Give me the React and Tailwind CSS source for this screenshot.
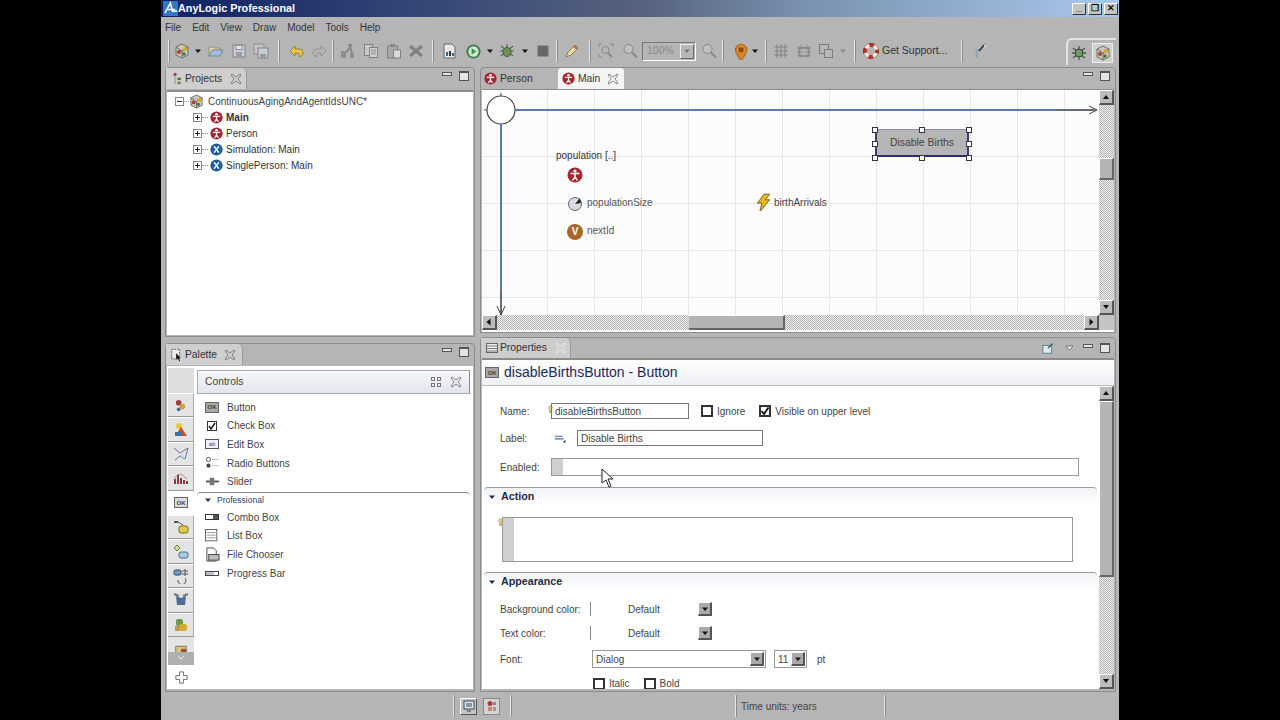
import React from "react";

// tiny drawn icons, all 16x16 unless noted
const Svg = ({ s = 16, vb = "0 0 16 16", className = "", children }) => (
  <svg width={s} height={s} viewBox={vb} className={"shrink-0 " + className}>
    {children}
  </svg>
);

const Agent = ({ s = 14, fill = "#a8242f" }) => (
  <Svg s={s}>
    <circle cx="8" cy="8" r="7.5" fill={fill} />
    <circle cx="8" cy="4" r="1.6" fill="#fff" />
    <path d="M3.5 6.5h9M8 6v4M8 10l-2.5 3.5M8 10l2.5 3.5" stroke="#fff" strokeWidth="1.5" fill="none" />
  </Svg>
);
const Sim = () => (
  <Svg s={13}>
    <circle cx="8" cy="8" r="7.5" fill="#1f5c9c" />
    <path d="M5 4l6 8M11 4l-6 8" stroke="#dfeaf5" strokeWidth="2" />
  </Svg>
);
const Cube = ({ s = 16 }) => (
  <Svg s={s}>
    <path d="M8 1l6 3v8l-6 3-6-3V4z" fill="#c9c9bd" stroke="#6d6d60" />
    <path d="M8 8L2 4M8 8l6-4M8 8v7" stroke="#6d6d60" fill="none" />
    <circle cx="5" cy="9" r="2" fill="#b33a2c" />
    <circle cx="11" cy="6" r="2" fill="#d8a520" />
    <circle cx="10" cy="11" r="1.7" fill="#3a7a3a" />
  </Svg>
);
const Caret = ({ color = "#111" }) => (
  <Svg s={6} vb="0 0 6 6">
    <path d="M0 1.5h6L3 5z" fill={color} />
  </Svg>
);
const Open = () => (
  <Svg>
    <path d="M1 13V4h4l1 1h6v2" fill="#e8d9a0" stroke="#8b8b80" />
    <path d="M1 13l3-6h11l-3 6z" fill="#9fc0de" stroke="#6d87a0" />
  </Svg>
);
const Save = ({ dim }) => (
  <Svg>
    <rect x="2" y="2" width="12" height="12" fill={dim ? "#bdbdbd" : "#c6cdd6"} stroke="#80848a" />
    <rect x="5" y="2.5" width="6" height="4" fill="#e8e8e8" stroke="#8f8f8f" />
    <rect x="5" y="9" width="6" height="5" fill="#9a9ea3" />
  </Svg>
);
const SaveAll = () => (
  <Svg>
    <rect x="1" y="1" width="10" height="10" fill="#c4c4c4" stroke="#8f8f8f" />
    <rect x="5" y="5" width="10" height="10" fill="#c6cdd6" stroke="#80848a" />
    <rect x="7" y="11" width="6" height="4" fill="#999" />
  </Svg>
);
const Undo = ({ dim }) => (
  <Svg>
    <path
      d="M1 8l5-5v3h4c3 0 4 2 4 4s-2 4-4 4c1-1 1-4-1-4H6v3z"
      fill={dim ? "none" : "#e8c64a"}
      stroke={dim ? "#8d8d8d" : "#8f7a2c"}
      strokeWidth="0.9"
    />
  </Svg>
);
const Redo = () => (
  <svg width="16" height="16" viewBox="0 0 16 16" className="shrink-0 -scale-x-100">
    <path d="M1 8l5-5v3h4c3 0 4 2 4 4s-2 4-4 4c1-1 1-4-1-4H6v3z" fill="none" stroke="#8d8d8d" strokeWidth="0.9" />
  </svg>
);
const Cut = () => (
  <Svg>
    <path d="M12 1L6 10M9 1l3 9" stroke="#858585" strokeWidth="2" fill="none" />
    <rect x="1" y="8" width="5" height="7" fill="#8e8e8e" />
    <rect x="10" y="10" width="4" height="5" fill="#8e8e8e" />
  </Svg>
);
const Copy = () => (
  <Svg>
    <rect x="1.5" y="1.5" width="8" height="11" fill="#c9c9c9" stroke="#808080" />
    <rect x="6.5" y="4.5" width="8" height="10" fill="#d0d0d0" stroke="#808080" />
    <path d="M8 7h5M8 9h5M8 11h5" stroke="#909090" />
  </Svg>
);
const Paste = () => (
  <Svg>
    <rect x="1.5" y="3" width="10" height="12" fill="#a9a9a9" stroke="#808080" />
    <rect x="4" y="1" width="5" height="3" fill="#8a8a8a" />
    <rect x="7.5" y="7" width="7" height="8" fill="#d8d8d8" stroke="#808080" />
  </Svg>
);
const Del = () => (
  <Svg>
    <path d="M2 3l12 10M14 3L2 13" stroke="#808080" strokeWidth="3" />
  </Svg>
);
const Build = () => (
  <Svg>
    <path d="M2 1h8l3 3v11H2z" fill="#e8e8e8" stroke="#666" />
    <rect x="4" y="9" width="2" height="4" fill="#2a66a8" />
    <rect x="7" y="8" width="2" height="5" fill="#333" />
    <rect x="10" y="10" width="2" height="3" fill="#2a66a8" />
  </Svg>
);
const Run = () => (
  <Svg s={15}>
    <circle cx="8" cy="8" r="7.5" fill="#3f7a4a" />
    <circle cx="8" cy="8" r="5.5" fill="#d4e8d4" />
    <path d="M6 4.5l5 3.5-5 3.5z" fill="#2e9a3e" />
  </Svg>
);
const Bug = () => (
  <Svg>
    <path d="M2 3l12 10M14 3L2 13M1 8h14M8 1v3" stroke="#4a6a4a" strokeWidth="1.2" />
    <ellipse cx="8" cy="9" rx="4" ry="4.5" fill="#6f8f55" stroke="#3c5a3c" />
  </Svg>
);
const Stop = () => (
  <Svg s={14}>
    <rect x="2" y="2" width="12" height="12" fill="#666" stroke="#8a8a8a" />
  </Svg>
);
const Pencil = () => (
  <Svg>
    <path d="M2 14l2-5 7-7 3 3-7 7z" fill="#e8d8a0" stroke="#8f7a50" />
    <path d="M10 3l3 3" stroke="#b06a40" strokeWidth="2" />
  </Svg>
);
const ZoomFit = () => (
  <Svg>
    <path d="M1 4V1h3M12 1h3v3M1 11v3h3" stroke="#8a8a8a" fill="none" />
    <circle cx="7.5" cy="7" r="3.5" fill="none" stroke="#8a8a8a" />
    <path d="M10 10l4 4" stroke="#8a8a8a" strokeWidth="2" />
  </Svg>
);
const Zoom = () => (
  <Svg>
    <circle cx="6.5" cy="6" r="4.5" fill="#bfbfbf" stroke="#8a8a8a" />
    <path d="M10 9.5l5 5" stroke="#8a8a8a" strokeWidth="2" />
  </Svg>
);
const Pin = () => (
  <Svg s={18}>
    <path d="M9 17C6 12 4 10 4 7a5 5 0 0110 0c0 3-2 5-5 10z" fill="#d8862c" stroke="#a96a20" />
    <rect x="7" y="5" width="4" height="4" fill="#8a4a12" />
  </Svg>
);
const Grid = () => (
  <Svg>
    <path d="M4 1v14M8 1v14M12 1v14M1 4h14M1 8h14M1 12h14" stroke="#808080" />
  </Svg>
);
const Grid2 = () => (
  <Svg>
    <path d="M1 4h14M1 9h14M5 1v14M11 1v14" stroke="#999" />
    <rect x="3" y="5" width="10" height="8" fill="none" stroke="#707070" />
  </Svg>
);
const Layers = () => (
  <Svg>
    <rect x="1.5" y="1.5" width="9" height="9" fill="none" stroke="#7d7d7d" />
    <rect x="6.5" y="6.5" width="8" height="8" fill="#b8b8b8" stroke="#7d7d7d" />
  </Svg>
);
const Life = () => (
  <Svg>
    <circle cx="8" cy="8" r="6" fill="none" stroke="#f0ebe6" strokeWidth="4" />
    <circle cx="8" cy="8" r="6" fill="none" stroke="#b83226" strokeWidth="4" strokeDasharray="4.7 4.7" strokeDashoffset="2.3" />
    <circle cx="8" cy="8" r="7.7" fill="none" stroke="#6a2a24" strokeWidth="0.5" />
  </Svg>
);
const Wand = () => (
  <Svg>
    <path d="M4 6h5v2H7v7H5V8H4z" fill="#8fa4b8" />
    <path d="M8 8l6-7" stroke="#333" strokeWidth="1.6" />
    <path d="M13 1l1 2M15 4l-2-1" stroke="#e8e8e8" />
  </Svg>
);
const Gear = () => (
  <Svg>
    <path d="M2 3l12 10M14 3L2 13M1 8h14M8 1v14" stroke="#4a5a4a" strokeWidth="1.3" />
    <circle cx="8" cy="8" r="4" fill="#6f9a6a" stroke="#354a35" />
  </Svg>
);
const Close = ({ c = "#777", className = "" }) => (
  <Svg s={12} vb="0 0 12 12" className={className}>
    <path d="M2 1l4 3 4-3 1 1-3 4 3 4-1 1-4-3-4 3-1-1 3-4-3-4z" fill="none" stroke={c} strokeWidth="0.9" />
  </Svg>
);
const MinMax = () => (
  <div className="flex items-center gap-[7px]">
    <div className="w-[10px] h-[4px] border border-[#555] bg-[#e4e4e4] -mt-[5px]" />
    <div className="w-[10px] h-[10px] border border-[#555] border-t-2 bg-[#e4e4e4]" />
  </div>
);
const Sep = ({ className = "w-[14px]" }) => (
  <div className={"flex justify-center shrink-0 " + className}>
    <div className="w-[2px] h-[22px] bg-[#e6e6e6] border-r border-[#8a8a8a]" />
  </div>
);
const T = ({ className, children }) => (
  <div className={"flex items-center justify-center shrink-0 " + className}>{children}</div>
);

const Arrow = ({ d }) => {
  const p = { u: "M1 6l3-4 3 4z", d: "M1 2l3 4 3-4z", l: "M5.5 0.5v7l-4-3.5z", r: "M2.5 0.5v7l4-3.5z" }[d];
  return (
    <div className="w-[15px] h-[15px] shrink-0 flex items-center justify-center bg-[#bcbcbc] border-t border-l border-white border-r-2 border-b-2 border-r-[#555] border-b-[#555]">
      <Svg s={8} vb="0 0 8 8">
        <path d={p} fill="#111" />
      </Svg>
    </div>
  );
};
const dither = "bg-[repeating-conic-gradient(#b4b4b4_0_25%,#f0f0f0_0_50%)] bg-[size:2px_2px]";

const TabLabel = ({ children }) => <span className="text-[10.3px] text-[#333]">{children}</span>;

const Check = ({ checked, className = "w-[12px] h-[12px]" }) => (
  <div className={"border-2 border-[#333] bg-white shrink-0 flex items-center justify-center " + className}>
    {checked && (
      <Svg s={10} vb="0 0 10 10">
        <path d="M1.5 5l2.5 3 4.5-6.5" fill="none" stroke="#111" strokeWidth="1.8" />
      </Svg>
    )}
  </div>
);

const Bulb = () => (
  <Svg s={9} vb="0 0 6 10">
    <path d="M1 4a2 2 0 014 0c0 1-1 2-1 3H2c0-1-1-2-1-3zM2 8h2v1.5H2z" fill="#e8d88a" stroke="#8a7a3a" strokeWidth="0.6" />
  </Svg>
);

function TreeRow({ icon, bold, children }) {
  return (
    <div className="flex items-center h-[16px] pl-[26px]">
      <div className="w-[9px] h-[9px] border border-[#888] bg-white flex items-center justify-center relative shrink-0">
        <div className="w-[5px] h-px bg-[#222]" />
        <div className="absolute w-px h-[5px] bg-[#222]" />
      </div>
      <div className="w-[6px] border-t border-dotted border-[#999] shrink-0 mr-[1px]" />
      <div className="w-[14px] flex justify-center shrink-0">{icon}</div>
      <span className={"ml-[3px] text-[10px] text-[#333] " + (bold ? "font-bold text-[#111]" : "")}>{children}</span>
    </div>
  );
}

function Projects() {
  return (
    <section className="h-[270px] flex flex-col border border-[#8c8c8c] rounded-t-[4px]">
      <header className="h-[22px] flex items-start pr-[5px]">
        <div className="w-[81px] h-[21px] flex items-center gap-[1px] pl-[5px] bg-[#cfcfcf] rounded-tr-[5px] border-r border-[#999]">
          <Svg s={13}>
            <circle cx="5" cy="3" r="2" fill="#a83c3c" />
            <path d="M5 4v11" stroke="#888" />
            <rect x="8" y="7" width="4" height="3" fill="#4a6f3a" />
            <rect x="8" y="12" width="4" height="3" fill="#8a7a3a" />
          </Svg>
          <TabLabel>Projects</TabLabel>
          <Close className="ml-[7px]" />
        </div>
        <div className="ml-auto mt-[3px]">
          <MinMax />
        </div>
      </header>
      <div className="mx-px mb-px flex-1 bg-white border-t-2 border-[#8c8c8c] pt-[1px]">
        <div className="flex items-center h-[16px] pl-[8px]">
          <div className="w-[9px] h-[9px] border border-[#888] flex items-center justify-center shrink-0">
            <div className="w-[5px] h-px bg-[#222]" />
          </div>
          <div className="w-[5px] border-t border-dotted border-[#999] shrink-0" />
          <Cube s={15} />
          <span className="ml-[4px] text-[10px] text-[#444]">ContinuousAgingAndAgentIdsUNC*</span>
        </div>
        <TreeRow bold icon={<Agent s={13} />}>Main</TreeRow>
        <TreeRow icon={<Agent s={13} />}>Person</TreeRow>
        <TreeRow icon={<Sim />}>Simulation: Main</TreeRow>
        <TreeRow icon={<Sim />}>SinglePerson: Main</TreeRow>
      </div>
    </section>
  );
}

const RailBtn = ({ active, children }) => (
  <div
    className={
      "h-[24.4px] flex items-center justify-center " +
      (active ? "" : "bg-[#e4e4e4] border-t border-white border-b border-b-[#999] border-r border-r-[#aaa]")
    }
  >
    {children}
  </div>
);
const OkIcon = ({ dark }) => (
  <div
    className={
      "w-[14px] h-[11px] border border-[#666] flex items-center justify-center text-[6px] leading-none font-bold text-[#444] " +
      (dark ? "bg-[#a8a8a8]" : "bg-[#dcdcdc]")
    }
  >
    OK
  </div>
);

const PaletteItem = ({ icon, children }) => (
  <div className="h-[18.6px] flex items-center pl-[8px]">
    <div className="w-[14px] flex justify-center shrink-0">{icon}</div>
    <span className="ml-[8px] text-[10px] text-[#444]">{children}</span>
  </div>
);

function Palette() {
  return (
    <section className="flex-1 flex flex-col border border-[#8c8c8c] rounded-t-[4px]">
      <header className="h-[22px] flex items-start pr-[5px]">
        <div className="w-[77px] h-[21px] flex items-center gap-[1px] pl-[4px] bg-[#cfcfcf] rounded-tr-[5px] border-r border-[#999]">
          <Svg s={14}>
            <rect x="2" y="1.5" width="9" height="11" fill="#eee" stroke="#555" strokeDasharray="2 1" />
            <path d="M7 6l5 5-2 .5 1.5 3-1 .5-1.5-3L7 13z" fill="#111" />
          </Svg>
          <TabLabel>Palette</TabLabel>
          <Close className="ml-[6px]" />
        </div>
        <div className="ml-auto mt-[3px]">
          <MinMax />
        </div>
      </header>
      <div className="mx-px mb-[2px] flex-1 bg-white flex overflow-hidden">
        <div className="w-[26px] ml-px pt-[2px] flex flex-col shrink-0">
          <div className="h-[25px] bg-[#dedede]" />
          <RailBtn>
            <Svg s={15}>
              <circle cx="6" cy="5" r="3" fill="#a83c3c" />
              <circle cx="10" cy="9" r="3" fill="#d0a030" />
              <circle cx="6" cy="12" r="2" fill="#4a6aa0" />
            </Svg>
          </RailBtn>
          <RailBtn>
            <Svg>
              <circle cx="6" cy="4" r="3" fill="#e8c83a" />
              <path d="M2 14L8 5l6 9z" fill="#c4502c" />
              <rect x="2" y="10" width="7" height="4" fill="#3a70b0" />
            </Svg>
          </RailBtn>
          <RailBtn>
            <Svg>
              <path d="M1 2l6 5 8-5-3 11-5-3-5 4" fill="none" stroke="#5a7a9a" />
              <path d="M7 7l5 6-5-3z" fill="#b8d4e8" />
            </Svg>
          </RailBtn>
          <RailBtn>
            <Svg>
              <path d="M2 14V9M5 14V5M8 14V8M11 14V10M14 14v-3" stroke="#8a3a3a" strokeWidth="2" />
              <path d="M1 10C4 3 7 2 14 9" stroke="#c08080" fill="none" />
            </Svg>
          </RailBtn>
          <RailBtn active>
            <OkIcon />
          </RailBtn>
          <RailBtn>
            <Svg>
              <rect x="1" y="2" width="4" height="2" fill="#555" />
              <path d="M5 3l5 3" stroke="#555" />
              <rect x="6" y="7" width="9" height="7" rx="2" fill="#e0cc50" stroke="#7a6a20" />
            </Svg>
          </RailBtn>
          <RailBtn>
            <Svg>
              <path d="M4 1l3 3-3 3-3-3z" fill="#cde0a0" stroke="#6a7a3a" />
              <rect x="6" y="8" width="9" height="6" rx="2" fill="#a8cce8" stroke="#4a6a8a" />
            </Svg>
          </RailBtn>
          <RailBtn>
            <Svg>
              <rect x="1" y="2" width="7" height="5" rx="1.5" fill="#6a9ad0" stroke="#345" />
              <path d="M9 3h6M9 6h6M12 1v7" stroke="#555" />
              <path d="M12 10a4 4 0 11-7 2" fill="none" stroke="#555" />
            </Svg>
          </RailBtn>
          <RailBtn>
            <Svg>
              <path d="M3 4l5 2 5-2-1 9H4z" fill="#4f6a96" />
              <path d="M1 2l5 2M15 2l-5 2" stroke="#777" strokeWidth="2" />
            </Svg>
          </RailBtn>
          <RailBtn>
            <Svg>
              <rect x="3" y="2" width="7" height="7" rx="2" fill="#6a9a4a" />
              <rect x="6" y="7" width="8" height="7" rx="2" fill="#d8a830" />
              <rect x="2" y="9" width="5" height="5" fill="#b89a50" />
            </Svg>
          </RailBtn>
          <div className="h-[15px] bg-[#e4e4e4] flex justify-center pt-[4px] overflow-hidden">
            <Svg s={14}>
              <path d="M2 6h12v9H2z" fill="#d8c880" stroke="#7a6a3a" />
              <rect x="8" y="9" width="6" height="6" fill="#a84a3a" />
            </Svg>
          </div>
          <div className="h-[13px] bg-[#b0b0b0] flex items-center justify-center">
            <Svg s={8} vb="0 0 8 8">
              <path d="M1 2l3 3 3-3" fill="none" stroke="#eee" />
            </Svg>
          </div>
          <div className="flex justify-center mt-[5px]">
            <Svg s={15}>
              <path d="M6 2h4v4h4v4h-4v4H6v-4H2V6h4z" fill="#fff" stroke="#666" />
            </Svg>
          </div>
        </div>
        <div className="flex-1 pl-[3px] pr-[3px] pt-[4px]">
          <div className="h-[24px] flex items-center pl-[7px] pr-[7px] border border-[#a3acb6] border-r-[#889] bg-[linear-gradient(#f6f8fa,#e2e7ee)]">
            <span className="text-[10.3px] text-[#444]">Controls</span>
            <div className="ml-auto mr-[9px] grid grid-cols-2 gap-[2px]">
              <div className="w-[4px] h-[4px] border border-[#777]" />
              <div className="w-[4px] h-[4px] border border-[#777]" />
              <div className="w-[4px] h-[4px] border border-[#777]" />
              <div className="w-[4px] h-[4px] border border-[#777]" />
            </div>
            <Close />
          </div>
          <div className="pt-[4px]">
            <PaletteItem icon={<OkIcon dark />}>Button</PaletteItem>
            <PaletteItem
              icon={
                <div className="w-[10px] h-[10px] border border-[#333] flex items-center justify-center">
                  <Svg s={8} vb="0 0 8 8">
                    <path d="M1 4l2 3 4-6" fill="none" stroke="#111" strokeWidth="1.4" />
                  </Svg>
                </div>
              }
            >
              Check Box
            </PaletteItem>
            <PaletteItem
              icon={
                <div className="w-[14px] h-[10px] border border-[#555] flex items-center justify-center text-[6px] leading-none text-[#357] bg-[#eef]">
                  ab
                </div>
              }
            >
              Edit Box
            </PaletteItem>
            <PaletteItem
              icon={
                <Svg s={14}>
                  <circle cx="4" cy="4" r="2.4" fill="#fff" stroke="#444" />
                  <circle cx="4" cy="11" r="2.4" fill="#444" />
                  <path d="M8 4h7M8 11h7" stroke="#777" strokeDasharray="1 1" />
                </Svg>
              }
            >
              Radio Buttons
            </PaletteItem>
            <PaletteItem
              icon={
                <Svg s={15}>
                  <path d="M1 8h14" stroke="#555" strokeWidth="2" />
                  <rect x="5" y="4" width="5" height="8" rx="1" fill="#777" />
                </Svg>
              }
            >
              Slider
            </PaletteItem>
          </div>
          <div className="h-[16px] mt-[1px] flex items-center border-t border-[#888] rounded-t-[4px] pl-[8px]">
            <Caret color="#234" />
            <span className="ml-[6px] text-[8.5px] text-[#2c4460]">Professional</span>
          </div>
          <div>
            <PaletteItem
              icon={
                <div className="w-[15px] h-[6px] border border-[#333] flex justify-end">
                  <div className="w-[5px] bg-[#555]" />
                </div>
              }
            >
              Combo Box
            </PaletteItem>
            <PaletteItem
              icon={
                <Svg s={14}>
                  <rect x="0.5" y="0.5" width="13" height="13" fill="#fff" stroke="#555" />
                  <path d="M2 4h10M2 7h10M2 10h10" stroke="#8a8aa0" />
                </Svg>
              }
            >
              List Box
            </PaletteItem>
            <PaletteItem
              icon={
                <Svg s={15}>
                  <path d="M2 1h7l3 3v11H2z" fill="#fff" stroke="#444" />
                  <rect x="4" y="8" width="11" height="6" fill="#bbb" stroke="#444" />
                </Svg>
              }
            >
              File Chooser
            </PaletteItem>
            <PaletteItem
              icon={
                <div className="w-[15px] h-[5px] border border-[#444] bg-[linear-gradient(90deg,#bcc0d0_70%,#fff_70%)]" />
              }
            >
              Progress Bar
            </PaletteItem>
          </div>
        </div>
      </div>
    </section>
  );
}

const Handle = ({ className }) => (
  <div className={"absolute w-[6px] h-[6px] bg-white border border-[#334] " + className} />
);

function Editor() {
  return (
    <section className="h-[266px] flex flex-col border border-[#8c8c8c] rounded-t-[4px]">
      <header className="h-[21px] flex items-start pr-[5px]">
        <div className="w-[77px] h-[21px] flex items-center gap-[3px] pl-[3px]">
          <Agent s={13} />
          <TabLabel>Person</TabLabel>
        </div>
        <div className="w-[66px] h-[21px] flex items-center gap-[3px] pl-[4px] bg-[#f4f4f4] rounded-t-[3px]">
          <Agent s={13} />
          <TabLabel>Main</TabLabel>
          <Close className="ml-[4px]" />
        </div>
        <div className="ml-auto mt-[3px]">
          <MinMax />
        </div>
      </header>
      <div className="mx-px flex-1 flex flex-col bg-white border-t border-[#8c8c8c] overflow-hidden">
        <div className="flex-1 flex min-h-0">
          <div className="flex-1 relative bg-[#fcfcfc] bg-[linear-gradient(#e6e6ea_1px,transparent_1px),linear-gradient(90deg,#e6e6ea_1px,transparent_1px)] bg-[size:47px_47px] bg-[position:18px_19px]">
            {/* diagram canvas: axes and elements sit where they were placed */}
            <svg className="absolute left-0 top-0" width="618" height="226">
              <circle cx="19" cy="20" r="14" fill="#fff" stroke="#444" strokeWidth="1.2" />
              <path d="M19 3v3M2 20h3" stroke="#555" />
              <path d="M33 20H612" stroke="#5b7bab" strokeWidth="2" />
              <path d="M575 20h39" stroke="#666" strokeWidth="1.5" />
              <path d="M607 16l8 4-8 4" fill="none" stroke="#444" />
              <path d="M19 34V225" stroke="#5b7bab" strokeWidth="2" />
              <path d="M19 200v25" stroke="#666" strokeWidth="1.5" />
              <path d="M15 216l4 9 4-9" fill="none" stroke="#444" />
            </svg>
            <span className="absolute left-[74px] top-[58px] text-[10px] text-[#333]">population [..]</span>
            <div className="absolute left-[85px] top-[77px]">
              <Agent s={16} />
            </div>
            <div className="absolute left-[85px] top-[105px] flex items-center gap-[4px]">
              <Svg s={16}>
                <circle cx="8" cy="8" r="6.5" fill="#d8dce0" stroke="#666" />
                <path d="M8 8l5-6 1 5z" fill="#222" />
              </Svg>
              <span className="pb-[2px] text-[10px] text-[#555]">populationSize</span>
            </div>
            <div className="absolute left-[85px] top-[133px] flex items-center gap-[4px]">
              <div className="w-[16px] h-[16px] rounded-full bg-[#a9682a] flex items-center justify-center text-white text-[10px] font-bold leading-none">
                V
              </div>
              <span className="pb-[2px] text-[10px] text-[#555]">nextId</span>
            </div>
            <div className="absolute left-[272px] top-[103px] flex items-center gap-[2px]">
              <Svg s={18}>
                <path d="M9 1h5l-4 5h4L5 17l2-8H3z" fill="#e8b820" stroke="#6a5a20" strokeWidth="0.8" />
              </Svg>
              <span className="text-[10px] text-[#444]">birthArrivals</span>
            </div>
            <div className="absolute left-[393px] top-[39px] w-[94px] h-[28px] bg-[#b6b6b6] border-t border-x-2 border-x-[#3c3c78] border-t-[#8a8ab0] border-b-2 border-b-[#2c2c70] flex items-center justify-center text-[10.4px] text-[#444]">
              Disable Births
            </div>
            <Handle className="left-[390px] top-[37px]" />
            <Handle className="left-[437px] top-[37px]" />
            <Handle className="left-[484px] top-[37px]" />
            <Handle className="left-[390px] top-[51px]" />
            <Handle className="left-[484px] top-[51px]" />
            <Handle className="left-[390px] top-[65px]" />
            <Handle className="left-[437px] top-[65px]" />
            <Handle className="left-[484px] top-[65px]" />
          </div>
          <div className={"w-[15px] flex flex-col " + dither}>
            <Arrow d="u" />
            <div className="mt-[53px] h-[22px] bg-[#b4b4b4] border-t border-l border-white border-r-2 border-b-2 border-r-[#666] border-b-[#666]" />
            <div className="flex-1" />
            <Arrow d="d" />
          </div>
        </div>
        <div className="h-[15px] flex bg-[#c4c4c4] mb-[2px]">
          <div className={"flex-1 flex " + dither}>
            <Arrow d="l" />
            <div className="ml-[192px] w-[96px] h-[15px] bg-[#b4b4b4] border-t border-white border-r-2 border-b-2 border-r-[#666] border-b-[#666]" />
            <div className="flex-1" />
            <Arrow d="r" />
          </div>
          <div className="w-[15px]" />
        </div>
      </div>
    </section>
  );
}

const SectionHead = ({ className = "mt-[10px]", children }) => (
  <div className={"h-[18px] mx-[2px] flex items-center pl-[5px] border-t border-[#9a9a9a] rounded-t-[4px] bg-[linear-gradient(#f0f2f5,#fff)] " + className}>
    <Caret color="#1c2a4a" />
    <span className="ml-[6px] text-[10.7px] font-bold text-[#1c2a4a]">{children}</span>
  </div>
);
const DropBtn = () => (
  <div className="w-[14px] h-[14px] shrink-0 bg-[#aaa] border-t border-l border-white border-r-2 border-b-2 border-r-[#555] border-b-[#555] flex items-center justify-center">
    <Caret />
  </div>
);

function Properties() {
  return (
    <section className="flex-1 flex flex-col border border-[#8c8c8c] rounded-t-[4px] min-h-0">
      <header className="h-[20px] flex items-start pr-[5px]">
        <div className="w-[90px] h-[20px] flex items-center gap-[2px] pl-[5px] bg-[#cdcdcd] rounded-tr-[5px] border-r border-[#999]">
          <Svg s={12} vb="0 0 12 12">
            <rect x="0.5" y="1.5" width="11" height="9" fill="#eee" stroke="#666" />
            <path d="M1 4h10M1 6.5h10M1 9h10" stroke="#777" />
          </Svg>
          <TabLabel>Properties</TabLabel>
          <Close c="#eee" className="ml-[6px]" />
        </div>
        <div className="ml-auto mt-[3px] flex items-center gap-[9px]">
          <Svg s={14}>
            <rect x="1" y="5" width="10" height="9" fill="#dfe8ee" stroke="#4a7a8a" />
            <path d="M7 8l5-5" stroke="#3a7a4a" strokeWidth="2" />
          </Svg>
          <Svg s={9} vb="0 0 9 9">
            <path d="M1 2h7L4.5 6z" fill="#eee" stroke="#555" strokeWidth="0.7" />
          </Svg>
          <MinMax />
        </div>
      </header>
      <div className="mx-px mb-[2px] flex-1 min-h-0 flex flex-col bg-white border-t-2 border-[#8c8c8c]">
        <div className="h-[26px] shrink-0 flex items-center gap-[5px] pl-[3px] border-b border-[#bbb] bg-[linear-gradient(#fff,#eef0f3)]">
          <OkIcon dark />
          <span className="text-[14px] text-[#1c2a5a] font-medium">disableBirthsButton - Button</span>
        </div>
        <div className="flex-1 min-h-0 flex">
          <div className="flex-1 overflow-hidden pt-[17px] text-[10px] text-[#444]">
            <div className="flex items-center h-[16px] pl-[18px]">
              <span className="w-[46px]">Name:</span>
              <div className="w-[5px] -mt-[6px]">
                <Bulb />
              </div>
              <div className="w-[138px] h-[16px] border border-[#777] pl-[3px] flex items-center">disableBirthsButton</div>
              <Check className="ml-[12px] w-[12px] h-[12px]" />
              <span className="ml-[4px]">Ignore</span>
              <Check checked className="ml-[14px] w-[12px] h-[12px]" />
              <span className="ml-[4px]">Visible on upper level</span>
            </div>
            <div className="flex items-center h-[16px] mt-[11px] pl-[18px]">
              <span className="w-[54px]">Label:</span>
              <Svg s={14}>
                <path d="M1 6h9M1 9h10" stroke="#4a6a9a" strokeWidth="1.3" />
                <path d="M10 13l3-3v3z" fill="#223" />
              </Svg>
              <div className="ml-[9px] w-[186px] h-[16px] border border-[#777] pl-[3px] flex items-center">Disable Births</div>
            </div>
            <div className="flex items-center h-[18px] mt-[12px] pl-[18px]">
              <span className="w-[51px]">Enabled:</span>
              <div className="w-[528px] h-[18px] border border-[#999]">
                <div className="w-[11px] h-full bg-[#cfcfcf]" />
              </div>
            </div>
            <SectionHead className="mt-[11px]">Action</SectionHead>
            <div className="mt-[12px] ml-[20px] w-[571px] h-[45px] border border-[#999] relative">
              <div className="w-[11px] h-full bg-[#cfcfcf]" />
              <div className="absolute -left-[7px] -top-[1px]">
                <Bulb />
              </div>
            </div>
            <SectionHead>Appearance</SectionHead>
            <div className="mt-[12px] h-[14px] pl-[18px] flex items-center">
              <span className="w-[90px]">Background color:</span>
              <div className="w-px h-[14px] bg-[#888]" />
              <span className="ml-[37px] w-[70px]">Default</span>
              <DropBtn />
            </div>
            <div className="mt-[10px] h-[14px] pl-[18px] flex items-center">
              <span className="w-[90px]">Text color:</span>
              <div className="w-px h-[14px] bg-[#888]" />
              <span className="ml-[37px] w-[70px]">Default</span>
              <DropBtn />
            </div>
            <div className="mt-[10px] h-[18px] pl-[18px] flex items-center">
              <span className="w-[92px]">Font:</span>
              <div className="w-[174px] h-[18px] border border-[#999] pl-[3px] pr-px flex items-center justify-between">
                Dialog
                <DropBtn />
              </div>
              <div className="ml-[8px] w-[33px] h-[18px] border border-[#999] pl-[3px] pr-px flex items-center justify-between">
                11
                <DropBtn />
              </div>
              <span className="ml-[10px]">pt</span>
            </div>
            <div className="mt-[10px] pl-[111px] h-[12px] leading-none flex items-center">
              <Check className="w-[12px] h-[12px]" />
              <span className="ml-[4px]">Italic</span>
              <Check className="ml-[14px] w-[12px] h-[12px]" />
              <span className="ml-[4px]">Bold</span>
            </div>
          </div>
          <div className={"w-[15px] flex flex-col " + dither}>
            <Arrow d="u" />
            <div className="h-[176px] bg-[#b4b4b4] border-t border-l border-white border-r-2 border-b-2 border-r-[#666] border-b-[#666]" />
            <div className="flex-1" />
            <Arrow d="d" />
          </div>
        </div>
      </div>
    </section>
  );
}

const Cursor = () => (
  <svg width="14" height="20" viewBox="0 0 14 20" className="absolute left-[440px] top-[468px]">
    <path d="M1 1v14l4-3 3 7 2-1-3-7h5z" fill="#fff" stroke="#222" />
  </svg>
);

export default function App() {
  return (
    <div className="w-[1280px] h-[720px] bg-black flex justify-center font-['Liberation_Sans',sans-serif] overflow-hidden">
      <div className="w-[958px] h-full bg-[#b5b5b5] flex flex-col relative">
        <div className="h-[17px] shrink-0 flex items-center bg-[linear-gradient(90deg,#0e2262_0%,#3a4a78_30%,#56627e_50%,#7b93b2_68%,#a8c8ec_100%)] pl-[2px] pr-px">
          <Svg s={15}>
            <rect width="16" height="16" fill="#2f78c4" />
            <path d="M2 13L8 2l2 9h5M5 9h8" fill="none" stroke="#fff" strokeWidth="1.6" />
          </Svg>
          <span className="text-[10.8px] font-bold text-white">AnyLogic Professional</span>
          <div className="ml-auto flex gap-[2px]">
            {["_", "❐", "✕"].map((c) => (
              <div
                key={c}
                className="w-[14px] h-[12px] bg-[#c4c4c4] border-t border-l border-white border-r border-b border-r-[#333] border-b-[#333] flex items-center justify-center text-[9px] leading-none text-[#111] font-bold"
              >
                {c}
              </div>
            ))}
          </div>
        </div>
        <nav className="h-[20px] shrink-0 flex items-center pl-[4px] gap-[11px] text-[10px] text-[#333]">
          <span>File</span>
          <span>Edit</span>
          <span>View</span>
          <span>Draw</span>
          <span>Model</span>
          <span>Tools</span>
          <span>Help</span>
        </nav>
        <div className="h-[30px] shrink-0 flex items-center pl-[5px] pb-[2px] relative">
          <Sep className="w-[6px]" />
          <T className="w-[20px]"><Cube /></T>
          <T className="w-[12px]"><Caret /></T>
          <T className="w-[24px]"><Open /></T>
          <T className="w-[22px]"><Save /></T>
          <T className="w-[22px]"><SaveAll /></T>
          <Sep />
          <T className="w-[22px]"><Undo /></T>
          <T className="w-[22px]"><Redo /></T>
          <Sep className="w-[6px]" />
          <T className="w-[24px]"><Cut /></T>
          <T className="w-[22px]"><Copy /></T>
          <T className="w-[24px]"><Paste /></T>
          <T className="w-[20px]"><Del /></T>
          <Sep />
          <T className="w-[20px]"><Build /></T>
          <T className="w-[26px]"><Run /></T>
          <T className="w-[8px]"><Caret /></T>
          <T className="w-[26px]"><Bug /></T>
          <T className="w-[10px]"><Caret /></T>
          <T className="w-[26px]"><Stop /></T>
          <Sep className="w-[2px]" />
          <T className="w-[28px]"><Pencil /></T>
          <Sep className="w-[8px]" />
          <T className="w-[24px]"><ZoomFit /></T>
          <T className="w-[24px]"><Zoom /></T>
          <div className="w-[54px] h-[19px] shrink-0 border border-[#777] border-r-white border-b-white flex items-center justify-between pl-[4px] pr-px text-[10.5px] text-[#8a8a8a]">
            100%
            <div className="w-[14px] h-[15px] bg-[#b8b8b8] border border-[#eee] border-r-[#666] border-b-[#666] flex items-center justify-center">
              <Caret color="#777" />
            </div>
          </div>
          <T className="w-[26px]"><Zoom /></T>
          <Sep className="w-[2px]" />
          <T className="w-[24px] ml-[4px]"><Pin /></T>
          <T className="w-[6px]"><Caret /></T>
          <Sep className="w-[16px]" />
          <T className="w-[14px]"><Grid /></T>
          <T className="w-[32px]"><Grid2 /></T>
          <T className="w-[12px]"><Layers /></T>
          <T className="w-[22px]"><Caret color="#888" /></T>
          <Sep className="w-[2px]" />
          <T className="w-[22px] ml-[4px]"><Life /></T>
          <span className="w-[66px] shrink-0 text-[10.5px] text-[#333]">Get Support...</span>
          <Sep className="w-[2px] ml-[13px]" />
          <T className="w-[32px]"><Wand /></T>
          <div className="absolute right-[3px] top-[1px] w-[50px] h-[27px] border-t-2 border-l-2 border-[#e4e4e4] rounded-tl-[6px] flex items-center justify-end gap-[5px] pr-[3px]">
            <Gear />
            <div className="w-[21px] h-[20px] bg-[#d0d0d0] border border-[#eee] flex items-center justify-center">
              <Cube />
            </div>
          </div>
        </div>
        <main className="flex-1 min-h-0 flex gap-[5px] pl-[4px]">
          <div className="w-[310px] flex flex-col gap-[6px]">
            <Projects />
            <Palette />
          </div>
          <div className="w-[636px] flex flex-col gap-[4px]">
            <Editor />
            <Properties />
          </div>
        </main>
        <footer className="h-[28px] shrink-0 flex items-center text-[10px] text-[#444]">
          <div className="w-[292px]" />
          <Sep className="w-[2px]" />
          <div className="ml-[5px] w-[17px] h-[17px] bg-[#c4c4c4] border border-[#555] border-t-white border-l-white flex items-center justify-center">
            <Svg s={12} vb="0 0 12 12">
              <rect x="1" y="1" width="10" height="8" fill="#dfe8f0" stroke="#345" />
              <path d="M3 4h6M3 6h6M4 11h4" stroke="#345" />
            </Svg>
          </div>
          <div className="ml-[6px] w-[17px] h-[17px] bg-[#d4d4d4] border border-[#888] flex items-center justify-center">
            <Svg s={12} vb="0 0 12 12">
              <circle cx="4" cy="3.5" r="2.5" fill="#a83c3c" />
              <rect x="7" y="2" width="3" height="3" fill="#889" />
              <rect x="2" y="7" width="4" height="4" fill="#c86" />
              <rect x="7" y="7" width="3" height="4" fill="#999" />
            </Svg>
          </div>
          <div className="w-[10px]" />
          <Sep className="w-[2px]" />
          <div className="w-[223px]" />
          <Sep className="w-[2px]" />
          <span className="ml-[4px] w-[143px]">Time units: years</span>
          <Sep className="w-[2px]" />
        </footer>
        <Cursor />
      </div>
    </div>
  );
}
